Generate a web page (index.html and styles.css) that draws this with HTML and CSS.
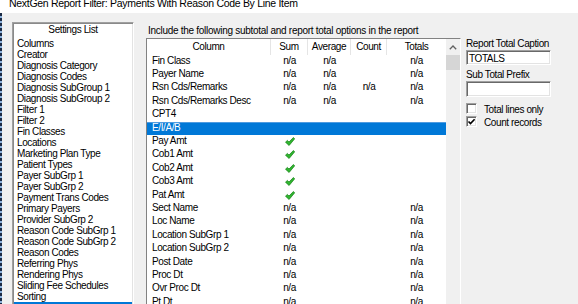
FILE: index.html
```html
<!DOCTYPE html>
<html>
<head>
<meta charset="utf-8">
<link rel="stylesheet" href="styles.css">
</head>
<body>
<div class="win">
  <div class="titlebar"><span class="title">NextGen Report Filter: Payments With Reason Code By Line Item</span></div>
  <div class="body">
    <div class="listbox">
      <div class="lb-head">Settings List</div>
      <div class="lb-item">Columns</div>
      <div class="lb-item">Creator</div>
      <div class="lb-item">Diagnosis Category</div>
      <div class="lb-item">Diagnosis Codes</div>
      <div class="lb-item">Diagnosis SubGroup 1</div>
      <div class="lb-item">Diagnosis SubGroup 2</div>
      <div class="lb-item">Filter 1</div>
      <div class="lb-item">Filter 2</div>
      <div class="lb-item">Fin Classes</div>
      <div class="lb-item">Locations</div>
      <div class="lb-item">Marketing Plan Type</div>
      <div class="lb-item">Patient Types</div>
      <div class="lb-item">Payer SubGrp 1</div>
      <div class="lb-item">Payer SubGrp 2</div>
      <div class="lb-item">Payment Trans Codes</div>
      <div class="lb-item">Primary Payers</div>
      <div class="lb-item">Provider SubGrp 2</div>
      <div class="lb-item">Reason Code SubGrp 1</div>
      <div class="lb-item">Reason Code SubGrp 2</div>
      <div class="lb-item">Reason Codes</div>
      <div class="lb-item">Referring Phys</div>
      <div class="lb-item">Rendering Phys</div>
      <div class="lb-item">Sliding Fee Schedules</div>
      <div class="lb-item">Sorting</div>
      <div class="lb-item sel">&nbsp;</div>
    </div>

    <div class="middle">
      <div class="caption">Include the following subtotal and report total options in the report</div>
      <div class="gridbox">
        <div class="grid">
          <div class="row head">
            <div class="c col">Column</div><div class="c">Sum</div><div class="c">Average</div><div class="c">Count</div><div class="c last">Totals</div>
          </div>
          <div class="row"><div class="c col">Fin Class</div><div class="c">n/a</div><div class="c">n/a</div><div class="c"></div><div class="c">n/a</div></div>
          <div class="row"><div class="c col">Payer Name</div><div class="c">n/a</div><div class="c">n/a</div><div class="c"></div><div class="c">n/a</div></div>
          <div class="row"><div class="c col">Rsn Cds/Remarks</div><div class="c">n/a</div><div class="c">n/a</div><div class="c">n/a</div><div class="c">n/a</div></div>
          <div class="row"><div class="c col">Rsn Cds/Remarks Desc</div><div class="c">n/a</div><div class="c">n/a</div><div class="c"></div><div class="c">n/a</div></div>
          <div class="row"><div class="c col">CPT4</div><div class="c"></div><div class="c"></div><div class="c"></div><div class="c"></div></div>
          <div class="row selected"><div class="c col">E/I/A/B</div><div class="c"></div><div class="c"></div><div class="c"></div><div class="c"></div></div>
          <div class="row"><div class="c col">Pay Amt</div><div class="c"><svg class="chk" viewBox="0 0 10 9"><path d="M0.5 5.2 L2.4 3.4 L4 5 L8.4 0.5 L9.7 1.8 L4.1 8.5 Z"/></svg></div><div class="c"></div><div class="c"></div><div class="c"></div></div>
          <div class="row"><div class="c col">Cob1 Amt</div><div class="c"><svg class="chk" viewBox="0 0 10 9"><path d="M0.5 5.2 L2.4 3.4 L4 5 L8.4 0.5 L9.7 1.8 L4.1 8.5 Z"/></svg></div><div class="c"></div><div class="c"></div><div class="c"></div></div>
          <div class="row"><div class="c col">Cob2 Amt</div><div class="c"><svg class="chk" viewBox="0 0 10 9"><path d="M0.5 5.2 L2.4 3.4 L4 5 L8.4 0.5 L9.7 1.8 L4.1 8.5 Z"/></svg></div><div class="c"></div><div class="c"></div><div class="c"></div></div>
          <div class="row"><div class="c col">Cob3 Amt</div><div class="c"><svg class="chk" viewBox="0 0 10 9"><path d="M0.5 5.2 L2.4 3.4 L4 5 L8.4 0.5 L9.7 1.8 L4.1 8.5 Z"/></svg></div><div class="c"></div><div class="c"></div><div class="c"></div></div>
          <div class="row"><div class="c col">Pat Amt</div><div class="c"><svg class="chk" viewBox="0 0 10 9"><path d="M0.5 5.2 L2.4 3.4 L4 5 L8.4 0.5 L9.7 1.8 L4.1 8.5 Z"/></svg></div><div class="c"></div><div class="c"></div><div class="c"></div></div>
          <div class="row"><div class="c col">Sect Name</div><div class="c">n/a</div><div class="c"></div><div class="c"></div><div class="c">n/a</div></div>
          <div class="row"><div class="c col">Loc Name</div><div class="c">n/a</div><div class="c"></div><div class="c"></div><div class="c">n/a</div></div>
          <div class="row"><div class="c col">Location SubGrp 1</div><div class="c">n/a</div><div class="c"></div><div class="c"></div><div class="c">n/a</div></div>
          <div class="row"><div class="c col">Location SubGrp 2</div><div class="c">n/a</div><div class="c"></div><div class="c"></div><div class="c">n/a</div></div>
          <div class="row"><div class="c col">Post Date</div><div class="c">n/a</div><div class="c"></div><div class="c"></div><div class="c">n/a</div></div>
          <div class="row"><div class="c col">Proc Dt</div><div class="c">n/a</div><div class="c"></div><div class="c"></div><div class="c">n/a</div></div>
          <div class="row"><div class="c col">Ovr Proc Dt</div><div class="c">n/a</div><div class="c"></div><div class="c"></div><div class="c">n/a</div></div>
          <div class="row"><div class="c col">Pt Dt</div><div class="c">n/a</div><div class="c"></div><div class="c"></div><div class="c">n/a</div></div>
        </div>
        <div class="vscroll">
          <div class="sb-arrow"><svg viewBox="0 0 8 5" class="chev"><path d="M0.8 4.2 L4 1 L7.2 4.2"/></svg></div>
          <div class="sb-thumb"></div>
        </div>
      </div>
    </div>

    <div class="right">
      <div class="lbl1">Report Total Caption</div>
      <div class="textbox">TOTALS</div>
      <div class="lbl2">Sub Total Prefix</div>
      <div class="textbox"></div>
      <div class="checks">
        <div class="cbrow"><span class="cb"></span><span class="cbl">Total lines only</span></div>
        <div class="cbrow"><span class="cb"><svg viewBox="0 0 9 9" class="tick"><path d="M1.5 4.5 L3.5 6.6 L7.6 2.2"/></svg></span><span class="cbl">Count records</span></div>
      </div>
    </div>
  </div>
</div>
</body>
</html>
```

FILE: styles.css
```css
html, body {
  margin: 0;
  padding: 0;
}
body {
  width: 578px;
  height: 304px;
  overflow: hidden;
  background: #f0f0f0;
  font-family: "Liberation Sans", Arial, sans-serif;
  font-size: 10px;
  letter-spacing: -0.4px;
  color: #000;
}
.win {
  height: 304px;
  display: flex;
  flex-direction: column;
}
.titlebar {
  height: 13px;
  flex: 0 0 13px;
  background: #fff;
  overflow: hidden;
  padding-left: 9px;
}
.title {
  display: block;
  font-size: 10.5px;
  letter-spacing: -0.3px;
  line-height: 13px;
  margin-top: -3px;
  white-space: nowrap;
  color: #000;
}
.body {
  flex: 1;
  min-height: 0;
  overflow: hidden;
  display: flex;
  align-items: flex-start;
  padding: 9px 0 0 12px;
  background: repeating-linear-gradient(to bottom, #1c2b45 0 3px, #8db2dd 3px 5px) left top / 2px 100% no-repeat, #f0f0f0;
}

/* Settings listbox */
.listbox {
  box-sizing: border-box;
  width: 122px;
  height: 300px;
  flex: 0 0 122px;
  background: #fff;
  border-top: 1px solid #a0a0a0;
  border-left: 1px solid #a0a0a0;
  border-right: 1px solid #fff;
  border-bottom: 1px solid #fff;
  box-shadow: inset 1px 1px 0 #8a8a8a, inset -1px -1px 0 #e3e3e3;
  overflow: hidden;
}
.lb-head {
  box-sizing: border-box;
  height: 15px;
  padding-top: 1px;
  line-height: 11px;
  text-align: center;
}
.lb-item {
  height: 11px;
  line-height: 11px;
  padding-left: 4px;
  white-space: nowrap;
}
.lb-item.sel {
  background: #0078d7;
  color: #fff;
  margin: 0 1px;
}

/* middle */
.middle {
  margin-left: 12px;
  width: 315px;
  flex: 0 0 315px;
}
.caption {
  box-sizing: border-box;
  height: 16px;
  padding: 2px 0 0 2px;
  line-height: 14px;
  letter-spacing: -0.28px;
  white-space: nowrap;
}
.gridbox {
  box-sizing: border-box;
  height: 270px;
  display: flex;
  background: #fff;
  border-top: 1px solid #828282;
  border-left: 1px solid #828282;
  border-right: 1px solid #fff;
  overflow: hidden;
}
.grid {
  width: 299px;
  flex: 0 0 299px;
}
.row {
  display: grid;
  grid-template-columns: 124px 37px 43px 36px 59px;
  height: 13.4px;
  line-height: 11px;
}
.row.head {
  height: 15.7px;
  line-height: 16px;
}
.c {
  text-align: center;
  white-space: nowrap;
}
.c.col {
  text-align: left;
  padding-left: 5px;
}
.head .c {
  border-right: 1px solid #e5e5e5;
}
.head .c.col {
  text-align: center;
  padding-left: 0;
}
.head .c.last {
  border-right: none;
}
.row.selected {
  background: #0078d7;
  color: #fff;
  box-shadow: inset 0 1px 0 #4f9be0;
}
.chk {
  width: 10px;
  height: 9px;
  margin-top: 2px;
  display: inline-block;
  vertical-align: top;
}
.chk path {
  fill: #2fb52f;
  stroke: #137d13;
  stroke-width: 0.7;
  stroke-linejoin: round;
}
.vscroll {
  flex: 1;
  background: #f0f0f0;
}
.sb-arrow {
  height: 16px;
  display: flex;
  align-items: center;
  justify-content: center;
}
.chev {
  width: 8px;
  height: 5px;
}
.chev path {
  fill: none;
  stroke: #606060;
  stroke-width: 1.3;
}
.sb-thumb {
  height: 15px;
  background: #d6d6d6;
}

/* right panel */
.right {
  margin-left: 5px;
  width: 85px;
  padding-top: 16px;
}
.lbl1 {
  height: 12px;
  line-height: 12px;
  white-space: nowrap;
}
.lbl2 {
  box-sizing: border-box;
  height: 16px;
  padding-top: 3px;
  line-height: 13px;
  white-space: nowrap;
}
.textbox {
  box-sizing: border-box;
  height: 15px;
  background: #fff;
  border-top: 1px solid #a0a0a0;
  border-left: 1px solid #a0a0a0;
  border-right: 1px solid #fff;
  border-bottom: 1px solid #fff;
  box-shadow: inset 1px 1px 0 #696969, inset -1px -1px 0 #e3e3e3;
  padding: 2px 0 0 2px;
  line-height: 11px;
}
.textbox + .lbl2 + .textbox {
  height: 16px;
}
.checks {
  margin-top: 6px;
}
.cbrow {
  height: 13px;
  display: flex;
  align-items: flex-start;
}
.cb {
  box-sizing: border-box;
  width: 11px;
  height: 11px;
  flex: 0 0 11px;
  background: #fff;
  border-top: 1px solid #a0a0a0;
  border-left: 1px solid #a0a0a0;
  border-right: 1px solid #fff;
  border-bottom: 1px solid #fff;
  box-shadow: inset 1px 1px 0 #696969, inset -1px -1px 0 #e3e3e3;
  display: flex;
  align-items: center;
  justify-content: center;
}
.tick {
  width: 9px;
  height: 9px;
}
.tick path {
  fill: none;
  stroke: #000;
  stroke-width: 1.6;
}
.cbl {
  margin-left: 7px;
  margin-top: 1px;
  line-height: 11px;
  white-space: nowrap;
}
```
